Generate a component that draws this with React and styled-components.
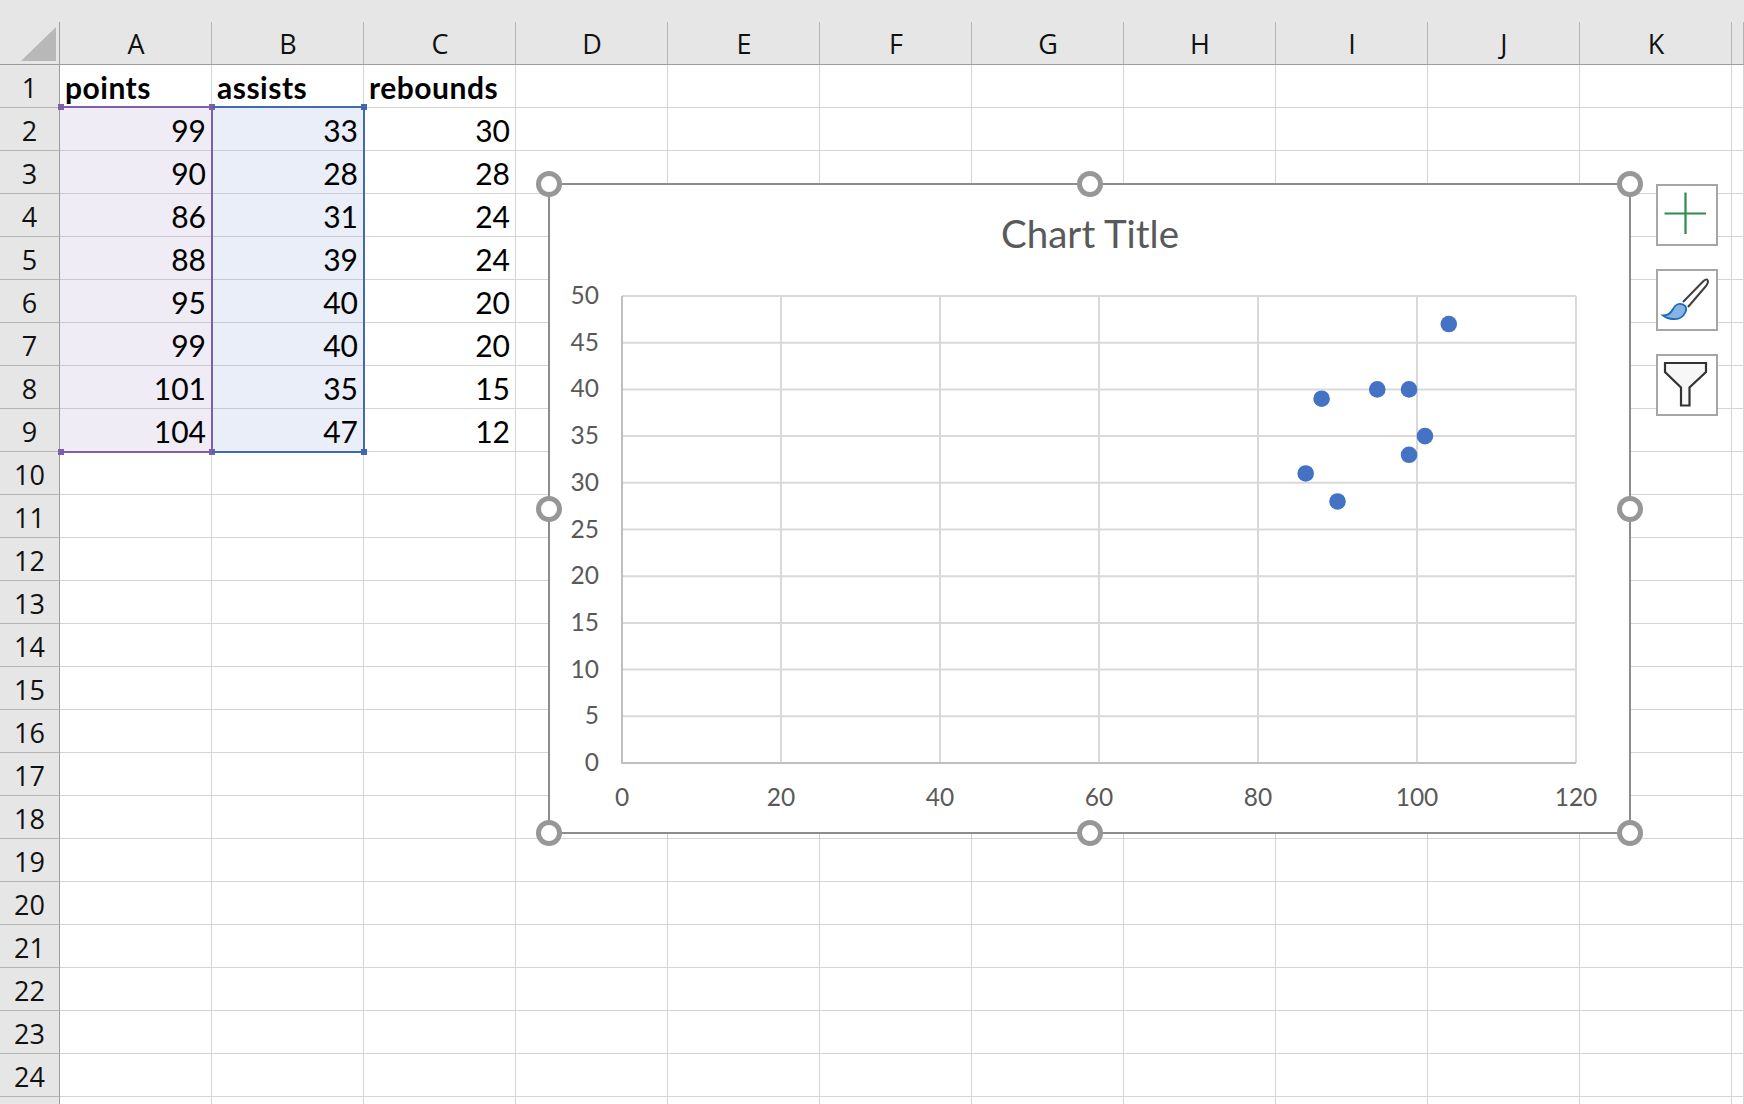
import React from 'react';
import styled, { createGlobalStyle, css } from 'styled-components';

const COLS = ['A', 'B', 'C', 'D', 'E', 'F', 'G', 'H', 'I', 'J', 'K', ''];
const ROW_COUNT = 25;

const SHEET = [
	['points', 'assists', 'rebounds'],
	[99, 33, 30],
	[90, 28, 28],
	[86, 31, 24],
	[88, 39, 24],
	[95, 40, 20],
	[99, 40, 20],
	[101, 35, 15],
	[104, 47, 12]
];

const FILLS = ['#f0ecf6', '#e9eef8'];
const TICKS_X = [0, 20, 40, 60, 80, 100, 120];
const TICKS_Y = [0, 5, 10, 15, 20, 25, 30, 35, 40, 45, 50];

// plot area, in the chart frame's own coordinates
const PLOT = { left: 72, top: 111, width: 954, height: 467 };
const toX = v => PLOT.left + (v / 120) * PLOT.width;
const toY = v => PLOT.top + PLOT.height - (v / 50) * PLOT.height;

const GlobalStyle = createGlobalStyle`
	html, body {
		margin: 0;
		background: #fff;
	}
`;

const sheetTracks = css`
	display: grid;
	grid-template-columns: 60px repeat(11, 152px) 12px;
	grid-template-rows: 65px repeat(${ROW_COUNT}, 43px);
`;

const Sheet = styled.div`
	position: relative;
	${sheetTracks}
	width: 1744px;
	height: 1104px;
	overflow: hidden;
	background: #fff;
	font-family: Lato, 'Liberation Sans', sans-serif;
`;

const SelectionLayer = styled.div`
	position: absolute;
	inset: 0;
	${sheetTracks}
	pointer-events: none;
`;

const Corner = styled.div`
	position: relative;
	background: #e6e6e6;
	border-bottom: 1px solid #9c9c9c;
	box-sizing: border-box;

	&::after {
		content: '';
		position: absolute;
		right: 0;
		top: 22px;
		bottom: 0;
		width: 1px;
		background: #9c9c9c;
	}
`;

const CornerMark = styled.svg`
	display: block;
	width: 60px;
	height: 65px;
`;

const ColHead = styled.div`
	position: relative;
	box-sizing: border-box;
	display: flex;
	align-items: center;
	justify-content: center;
	padding-top: 22px;
	background: #e6e6e6;
	border-bottom: 1px solid #9c9c9c;
	font-family: 'Open Sans', sans-serif;
	font-size: 27px;
	color: #111;

	&::after {
		content: '';
		position: absolute;
		right: 0;
		top: 22px;
		bottom: 0;
		width: 1px;
		background: #b4b4b4;
	}
`;

const RowHead = styled.div`
	box-sizing: border-box;
	display: flex;
	align-items: center;
	justify-content: center;
	padding-top: 2px;
	background: #e6e6e6;
	border-bottom: 1px solid #b4b4b4;
	border-right: 1px solid #9c9c9c;
	font-family: 'Open Sans', sans-serif;
	font-size: 27px;
	color: #111;
`;

const Cell = styled.div`
	box-sizing: border-box;
	display: flex;
	align-items: center;
	justify-content: ${p => (p.$bold ? 'flex-start' : 'flex-end')};
	padding: 2px 5px 0;
	background: ${p => p.$fill || '#fff'};
	border-bottom: 1px solid ${p => (p.$fill ? '#c9c9cf' : '#d4d4d4')};
	border-right: 1px solid ${p => (p.$fill ? '#c9c9cf' : '#d4d4d4')};
	font-size: 30px;
	font-weight: ${p => (p.$bold ? 700 : 400)};
	letter-spacing: ${p => (p.$bold ? '0.5px' : '0')};
	color: #000;
	white-space: nowrap;
`;

const Range = styled.div`
	position: relative;
	grid-column: ${p => p.$col};
	grid-row: 3 / 11;
	margin: -2px -1px -1px 0;
	border-top: 2px solid ${p => p.$color};
	border-right: 2px solid ${p => p.$color};
	border-bottom: 2px solid ${p => p.$color};
`;

const RangeHandle = styled.span`
	position: absolute;
	width: 6px;
	height: 6px;
	background: ${p => p.$color};
	${p => (p.$left ? 'left: -2px;' : 'right: -4px;')}
	${p => (p.$bottom ? 'bottom: -4px;' : 'top: -4px;')}
`;

const ChartFrame = styled.div`
	position: absolute;
	left: 548px;
	top: 183px;
	width: 1083px;
	height: 651px;
	box-sizing: border-box;
	border: 2px solid #8c8c8c;
	background: #fff;
`;

const ChartSvg = styled.svg`
	display: block;
	width: 1079px;
	height: 647px;
	font-family: Lato, 'Liberation Sans', sans-serif;
	fill: #595959;
`;

const GripHandle = styled.span`
	position: absolute;
	box-sizing: border-box;
	width: 26px;
	height: 26px;
	border: 5px solid #979797;
	border-radius: 50%;
	background: #fff;
	left: ${p => p.$x};
	top: ${p => p.$y};
	transform: translate(-50%, -50%);
`;

const SideTools = styled.div`
	position: absolute;
	left: 1656px;
	top: 184px;
	display: flex;
	flex-direction: column;
	gap: 23px;
`;

const ToolButton = styled.div`
	width: 62px;
	height: 62px;
	box-sizing: border-box;
	border: 2px solid #a6a6a6;
	background: #fff;
`;

const ToolIcon = styled.svg`
	display: block;
	width: 58px;
	height: 58px;
	overflow: visible;
`;

const PlusIcon = () => (
	<ToolIcon viewBox='2 2 58 58'>
		<path d='M8.5 29.5H50M29.5 8.5V50' fill='none' stroke='#2f8a4f' strokeWidth='2.2' />
	</ToolIcon>
);

const BrushIcon = () => (
	<ToolIcon viewBox='2 2 58 58'>
		<path
			d='M27 33L47 12.5C49 10.5 51 10 51.5 11C52.5 12.5 51.5 15 50 17L32 38'
			fill='#fff'
			stroke='#3f3f3f'
			strokeWidth='2'
		/>
		<path
			d='M7 46.5C11 46.5 15 44 17 40C19 35.5 23 34 27 35.5C30 37 31 39.5 29.5 43C27 48.5 22 50.5 17 50C13 50 9.5 48.5 7 46.5Z'
			fill='#85b3e6'
			stroke='#1b6ab3'
			strokeWidth='1.8'
		/>
	</ToolIcon>
);

const FunnelIcon = () => (
	<ToolIcon viewBox='2 2 58 58'>
		<path
			d='M9 9H50V18L33.5 33.5V51.5H25V33.5L9 18Z'
			fill='#f7f7f7'
			stroke='#333'
			strokeWidth='2.2'
		/>
	</ToolIcon>
);

const ScatterChart = () => {
	const dots = SHEET.slice(1).map(row => [row[0], row[1]]);
	return (
		<ChartSvg viewBox='0 0 1079 647'>
			<text x='540' y='62.5' textAnchor='middle' fontSize='38.5'>
				Chart Title
			</text>
			{TICKS_Y.slice(1).map(t => (
				<line key={t} x1={PLOT.left} x2={PLOT.left + PLOT.width} y1={toY(t)} y2={toY(t)} stroke='#d9d9d9' strokeWidth='2' />
			))}
			{TICKS_X.slice(1).map(t => (
				<line key={t} x1={toX(t)} x2={toX(t)} y1={PLOT.top} y2={PLOT.top + PLOT.height} stroke='#d9d9d9' strokeWidth='2' />
			))}
			<path
				d={`M${PLOT.left} ${PLOT.top}V${PLOT.top + PLOT.height}H${PLOT.left + PLOT.width}`}
				fill='none'
				stroke='#bfbfbf'
				strokeWidth='2'
			/>
			{TICKS_Y.map(t => (
				<text key={t} x={PLOT.left - 23} y={toY(t) + 8} textAnchor='end' fontSize='24.5'>
					{t}
				</text>
			))}
			{TICKS_X.map(t => (
				<text key={t} x={toX(t)} y='621' textAnchor='middle' fontSize='24.5'>
					{t}
				</text>
			))}
			{dots.map(([x, y]) => (
				<circle key={`${x}-${y}`} cx={toX(x)} cy={toY(y)} r='8.3' fill='#4472c4' />
			))}
		</ChartSvg>
	);
};

const GRIPS = [
	['-1px', '-1px'],
	['50%', '-1px'],
	['calc(100% + 1px)', '-1px'],
	['-1px', '50%'],
	['calc(100% + 1px)', '50%'],
	['-1px', 'calc(100% + 1px)'],
	['50%', 'calc(100% + 1px)'],
	['calc(100% + 1px)', 'calc(100% + 1px)']
];

const App = () => {
	const rows = Array.from({ length: ROW_COUNT }, (_, i) => i);
	return (
		<Sheet>
			<GlobalStyle />
			<Corner>
				<CornerMark viewBox='0 0 60 65'>
					<path d='M21 61H56V27Z' fill='#b8b8b8' />
				</CornerMark>
			</Corner>
			{COLS.map(c => (
				<ColHead key={c || 'L'}>{c}</ColHead>
			))}
			{rows.map(r => (
				<React.Fragment key={r}>
					<RowHead>{r < 24 ? r + 1 : ''}</RowHead>
					{COLS.map((c, i) => {
						const value = SHEET[r] && SHEET[r][i];
						const filled = r > 0 && r < 9 && i < 2;
						return (
							<Cell key={c || 'L'} $bold={r === 0} $fill={filled ? FILLS[i] : undefined}>
								{value}
							</Cell>
						);
					})}
				</React.Fragment>
			))}
			<SelectionLayer>
				<Range $col={2} $color='#7f60a8'>
					<RangeHandle $color='#7f60a8' $left />
					<RangeHandle $color='#7f60a8' $left $bottom />
					<RangeHandle $color='#7f60a8' />
					<RangeHandle $color='#7f60a8' $bottom />
				</Range>
				<Range $col={3} $color='#4168b0'>
					<RangeHandle $color='#4168b0' />
					<RangeHandle $color='#4168b0' $bottom />
				</Range>
			</SelectionLayer>
			<ChartFrame>
				<ScatterChart />
				{GRIPS.map(([x, y]) => (
					<GripHandle key={x + y} $x={x} $y={y} />
				))}
			</ChartFrame>
			<SideTools>
				<ToolButton>
					<PlusIcon />
				</ToolButton>
				<ToolButton>
					<BrushIcon />
				</ToolButton>
				<ToolButton>
					<FunnelIcon />
				</ToolButton>
			</SideTools>
		</Sheet>
	);
};

export default App;
